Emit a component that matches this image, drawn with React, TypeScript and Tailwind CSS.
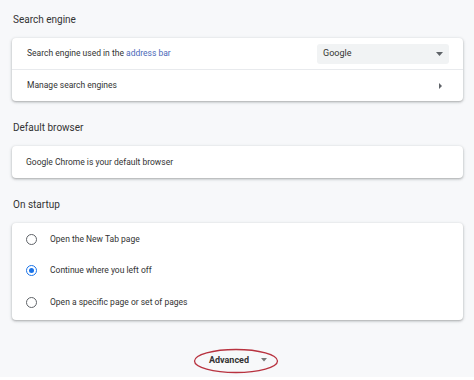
import React from "react";

const cardCls =
  "mx-[12px] w-[451px] bg-white rounded-[4px] shadow-[0_1px_2px_rgba(60,64,67,0.3),0_1px_3px_1px_rgba(60,64,67,0.12)]";

function Radio({ checked }: { checked?: boolean }) {
  return checked ? (
    <div className="w-[11px] h-[11px] rounded-full border-[1.5px] border-[#1a73e8] flex items-center justify-center">
      <div className="w-[5px] h-[5px] rounded-full bg-[#1a73e8]" />
    </div>
  ) : (
    <div className="w-[11px] h-[11px] rounded-full border-[1.5px] border-[#5f6368]" />
  );
}

export default function App() {
  return (
    <div
      className="w-[474px] h-[380px] bg-white flex flex-col text-[#333]"
      style={{ fontFamily: "Roboto, 'Liberation Sans', sans-serif" }}
    >
      <div className="h-[377px] bg-[#f7f8fa] flex flex-col">
        <div className="h-[38px] flex items-center pt-[2px] pl-[13px] text-[10px] leading-[14px] text-[#333]">
          Search engine
        </div>
        <div className={cardCls}>
          <div className="h-[32px] flex items-center pl-[15px] pr-[14px] border-b border-[#e8eaed] text-[8.5px]">
            <span className="flex-1">
              Search engine used in the{" "}
              <span className="text-[#4a68b8]">address bar</span>
            </span>
            <div className="w-[132px] h-[20px] bg-[#f1f3f4] rounded-[3px] flex items-center pl-[6px] pr-[6px] text-[9px]">
              <span className="flex-1">Google</span>
              <svg width="7" height="4" viewBox="0 0 7 4">
                <path d="M0 0 L7 0 L3.5 4 Z" fill="#5f6368" />
              </svg>
            </div>
          </div>
          <div className="h-[31px] flex items-center pl-[15px] pr-[21px] text-[8.5px]">
            <span className="flex-1">Manage search engines</span>
            <svg width="3" height="6" viewBox="0 0 3 6">
              <path d="M0 0 L3 3 L0 6 Z" fill="#5f6368" />
            </svg>
          </div>
        </div>
        <div className="h-[45px] flex items-end pb-[11px] pl-[13px] text-[10px] leading-[14px]">
          Default browser
        </div>
        <div className={cardCls}>
          <div className="h-[32px] flex items-center pl-[14px] text-[8.5px]">
            Google Chrome is your default browser
          </div>
        </div>
        <div className="h-[45px] flex items-end pb-[11px] pl-[13px] text-[10px] leading-[14px]">
          On startup
        </div>
        <div className={cardCls + " pt-[1px] pb-[1px]"}>
          <div className="h-[31px] flex items-center pl-[14px] text-[8.5px]">
            <Radio />
            <span className="ml-[13px]">Open the New Tab page</span>
          </div>
          <div className="h-[31px] flex items-center pl-[14px] text-[8.5px]">
            <Radio checked />
            <span className="ml-[13px]">Continue where you left off</span>
          </div>
          <div className="h-[33px] flex items-center pl-[14px] text-[8.5px]">
            <Radio />
            <span className="ml-[13px]">Open a specific page or set of pages</span>
          </div>
        </div>
        <div className="flex-1 flex items-end justify-center pb-[10px]">
          <div className="relative flex items-center gap-[12px] pl-[2px]">
            <span className="text-[9px] font-bold text-[#333]">Advanced</span>
            <svg width="6" height="4" viewBox="0 0 6 4">
              <path d="M0 0 L6 0 L3 3.5 Z" fill="#777" />
            </svg>
            <svg
              className="absolute left-[-14px] top-[-6px]"
              width="86"
              height="26"
              viewBox="0 0 86 26"
            >
              <ellipse cx="43" cy="13" rx="41.5" ry="11.5" fill="none" stroke="#b8323f" strokeWidth="1.3" />
            </svg>
          </div>
        </div>
      </div>
    </div>
  );
}
